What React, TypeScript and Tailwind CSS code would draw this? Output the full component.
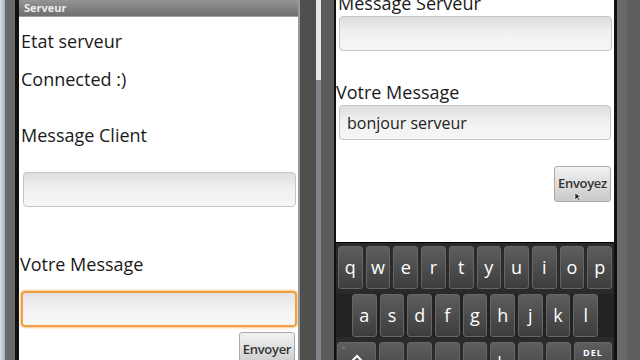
import React from "react"

const font = { fontFamily: '"Open Sans", "Noto Sans", sans-serif' }

function Field({ children, orange }: { children?: React.ReactNode; orange?: boolean }) {
    if (orange) {
        return (
            <div className="h-[36px] rounded-[4px] border-2 border-[#f0a040] shadow-[0_0_2px_1px_#f8c890] bg-gradient-to-b from-[#e2e2e2] via-[#f3f3f3] to-[#f7f7f7]" />
        )
    }
    return (
        <div className="h-[35px] rounded-[4px] border border-[#c4c4c4] bg-gradient-to-b from-[#dedede] via-[#f1f1f1] to-[#f6f6f6] flex items-center pl-[7px] text-[16px] text-[#222]">
            {children}
        </div>
    )
}

function Button({ label }: { label: string }) {
    return (
        <div className="h-[36px] rounded-[3px] border border-[#a9a9a9] bg-gradient-to-b from-[#f2f2f2] to-[#c9c9c9] flex items-center justify-center text-[13px] font-semibold text-[#333] tracking-[-0.3px]">
            {label}
        </div>
    )
}

function Key({ k, className = "" }: { k: React.ReactNode; className?: string }) {
    return (
        <div className={"h-[43px] rounded-[3px] border border-[#666] bg-gradient-to-b from-[#5e5e5e] to-[#3d3d3d] flex items-center justify-center text-white text-[18px] " + className}>
            {k}
        </div>
    )
}

function Keyboard() {
    const r1 = ["q", "w", "e", "r", "t", "y", "u", "i", "o", "p"]
    const r2 = ["a", "s", "d", "f", "g", "h", "j", "k", "l"]
    const r3 = ["z", "x", "c", "v", "b", "n", "m"]
    return (
        <div className="flex-1 min-h-0 overflow-hidden bg-[#2a2a2a] border-t border-black pt-[3px] flex flex-col gap-[5px]">
            <div className="grid grid-cols-10 gap-x-[3px] px-[2px] shrink-0">
                {r1.map(k => <Key key={k} k={k} />)}
            </div>
            <div className="grid grid-cols-9 gap-x-[3px] px-[16px] bg-[#222] shrink-0">
                {r2.map(k => <Key key={k} k={k} className="h-[42px]" />)}
            </div>
            <div className="flex gap-[3px] pl-[1px] pr-[2px] shrink-0">
                <div className="w-[39px] h-[43px] rounded-[3px] border border-[#666] bg-gradient-to-b from-[#5e5e5e] to-[#3d3d3d] relative flex justify-center">
                    <div className="absolute left-[4px] top-[3px] w-[3px] h-[3px] rounded-full bg-[#777]" />
                    <svg width="14" height="10" viewBox="0 0 14 10" className="mt-[10px]">
                        <path d="M2 8 L7 3 L12 8" fill="none" stroke="#fff" strokeWidth="2" />
                    </svg>
                </div>
                {r3.map(k => <Key key={k} k={k} className="flex-1" />)}
                <div className="w-[38px] h-[43px] rounded-[3px] border border-[#666] bg-gradient-to-b from-[#5e5e5e] to-[#3d3d3d] flex justify-center pt-[3px] text-white text-[9px] font-bold tracking-[1px]">
                    DEL
                </div>
            </div>
        </div>
    )
}

export default function App() {
    return (
        <div className="w-[640px] h-[360px] overflow-hidden flex bg-[#5c5c5c]" style={font}>
            {/* left emulator frame */}
            <div className="w-[5px] bg-gradient-to-r from-[#d8dde2] to-[#aab2ba]" />
            <div className="w-[10px] bg-[#6a6a6a]" />
            <div className="w-[4px] bg-[#111]" />

            {/* left screen */}
            <div className="w-[279px] bg-white flex flex-col">
                <div className="h-[17px] shrink-0 bg-gradient-to-b from-[#959595] to-[#6f6f6f] border-b border-[#a0a0a0] pl-[5px] text-[11px] font-bold text-[#ececec] leading-[16px]">
                    Serveur
                </div>
                <div className="pl-[2px] text-[18px] leading-[24px] text-[#1a1a1a] mt-[12px]">Etat serveur</div>
                <div className="pl-[2px] text-[18px] leading-[24px] text-[#1a1a1a] mt-[14px]">Connected :)</div>
                <div className="pl-[2px] text-[18px] leading-[24px] text-[#1a1a1a] mt-[32px]">Message Client</div>
                <div className="ml-[4px] mr-[2px] mt-[25px]">
                    <Field />
                </div>
                <div className="pl-[1px] text-[18px] leading-[24px] text-[#1a1a1a] mt-[45px]">Votre Message</div>
                <div className="ml-[2px] mr-[1px] mt-[15px]">
                    <Field orange />
                </div>
                <div className="self-end mr-[3px] mt-[5px] w-[56px] shrink-0">
                    <Button label="Envoyer" />
                </div>
            </div>

            {/* middle frame */}
            <div className="w-[2px] bg-[#9a9a9a]" />
            <div className="w-[16px] bg-[#4f4f4f]" />
            <div className="w-[5px] bg-[#80858c] flex flex-col">
                <div className="h-[80px] bg-[#e4e6ea]" />
            </div>
            <div className="w-[13px] bg-[#5c5c5c]" />
            <div className="w-[2px] bg-[#111]" />

            {/* right screen */}
            <div className="w-[278px] bg-white flex flex-col relative">
                <div className="pl-[2px] text-[18px] leading-[24px] text-[#1a1a1a] mt-[-9px] shrink-0">Message Serveur</div>
                <div className="ml-[3px] mr-[2px] mt-[1px] shrink-0">
                    <Field />
                </div>
                <div className="text-[18px] leading-[24px] text-[#1a1a1a] mt-[29px] shrink-0">Votre Message</div>
                <div className="ml-[3px] mr-[3px] mt-[1px] shrink-0">
                    <Field>bonjour serveur</Field>
                </div>
                <div className="self-end mr-[3px] mt-[26px] w-[57px] shrink-0">
                    <Button label="Envoyez" />
                </div>
                <svg width="8" height="10" viewBox="0 0 8 10" className="absolute left-[238px] top-[192px]">
                    <path d="M1 1 L1 8 L3 6 L5 9 L6 8 L4 5 L7 5 Z" fill="#222" stroke="#fff" strokeWidth="0.6" />
                </svg>
                <div className="h-[40px] shrink-0" />
                <Keyboard />
            </div>

            {/* right frame */}
            <div className="w-[3px] bg-[#111]" />
            <div className="w-[10px] bg-[#6a6a6a]" />
            <div className="flex-1 bg-[#5e5e5e]" />
        </div>
    )
}
